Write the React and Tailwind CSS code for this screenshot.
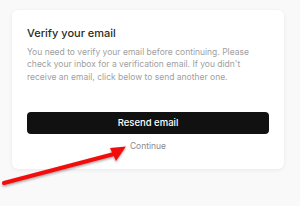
import React from 'react';

const Arrow = () => (
  <svg className="pointer-events-none absolute left-0 top-0" width="300" height="206" viewBox="0 0 300 206">
    <defs>
      <filter id="arrowShadow" x="-10%" y="-30%" width="120%" height="160%">
        <feDropShadow dx="0" dy="1.5" stdDeviation="1" floodColor="#000" floodOpacity="0.35" />
      </filter>
    </defs>
    <g filter="url(#arrowShadow)">
      <line x1="4" y1="183" x2="114" y2="154" stroke="#f20d0d" strokeWidth="4" strokeLinecap="round" />
      <polygon points="126,146.5 110,148 116,161" fill="#f20d0d" />
    </g>
  </svg>
);

export default function App() {
  return (
    <div
      className="relative h-[206px] w-[300px] overflow-hidden bg-[#f9f9f9] pl-[12px] pt-[10px]"
      style={{ fontFamily: 'Inter, "Noto Sans", sans-serif' }}
    >
      {/* Card */}
      <div className="flex h-[159px] w-[272px] flex-col rounded-md bg-white px-[15px] pt-[16px] shadow-[0_1px_4px_rgba(0,0,0,0.07)]">
        <h2 className="text-[11px] font-medium leading-[14px] text-[#2a2a2a]">Verify your email</h2>
        <p className="mt-[6px] text-[8.5px] leading-[12.4px] text-[#a0a0a0]">
          You need to verify your email before continuing. Please check your inbox for a verification email. If you didn't
          receive an email, click below to send another one.
        </p>
        <button className="mt-[29px] flex h-[22px] w-full items-center justify-center rounded-[4px] bg-[#111111] text-[9.5px] font-medium text-white">
          Resend email
        </button>
        <button className="mt-[6px] self-center text-[8.5px] text-[#8a8a8a]">Continue</button>
      </div>
      <Arrow />
    </div>
  );
}
